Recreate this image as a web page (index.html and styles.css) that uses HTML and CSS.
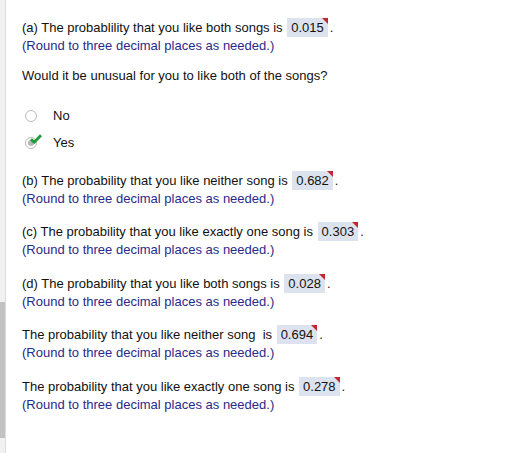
FILE: index.html
```html
<!DOCTYPE html>
<html>
<head>
<meta charset="utf-8">
<link rel="stylesheet" href="styles.css">
</head>
<body>
<div class="page">
  <div class="scroll"><div class="thumb"></div></div>
  <div class="divider"></div>
  <div class="content">
    <div class="block first">
      <div class="line">(a) The probablility that you like both songs is <span class="ans">0.015</span>.</div>
      <div class="line note">(Round to three decimal places as needed.)</div>
    </div>
    <div class="line question">Would it be unusual for you to like both of the songs?</div>
    <div class="options">
      <div class="opt"><span class="radio"></span><span class="lbl">No</span></div>
      <div class="opt"><span class="radio on"><svg class="check" viewBox="0 0 12 10" width="12" height="10"><path d="M1 5.2 L4.2 8.2 L11 1.2" fill="none" stroke="#1f9a3a" stroke-width="2.8"/></svg></span><span class="lbl">Yes</span></div>
    </div>
    <div class="block">
      <div class="line">(b) The probability that you like neither song is <span class="ans">0.682</span>.</div>
      <div class="line note">(Round to three decimal places as needed.)</div>
    </div>
    <div class="block">
      <div class="line">(c) The probability that you like exactly one song is <span class="ans">0.303</span>.</div>
      <div class="line note">(Round to three decimal places as needed.)</div>
    </div>
    <div class="block">
      <div class="line">(d) The probability that you like both songs is <span class="ans">0.028</span>.</div>
      <div class="line note">(Round to three decimal places as needed.)</div>
    </div>
    <div class="block">
      <div class="line">The probability that you like neither song&nbsp; is <span class="ans">0.694</span>.</div>
      <div class="line note">(Round to three decimal places as needed.)</div>
    </div>
    <div class="block">
      <div class="line">The probability that you like exactly one song is <span class="ans">0.278</span>.</div>
      <div class="line note">(Round to three decimal places as needed.)</div>
    </div>
  </div>
</div>
</body>
</html>
```
FILE: styles.css
```css
html, body {
  margin: 0;
  padding: 0;
  background: #ffffff;
}
.page {
  display: flex;
  width: 508px;
  height: 453px;
  overflow: hidden;
  font-family: "Liberation Sans", Arial, sans-serif;
  font-size: 13px;
  color: #111111;
}
.scroll {
  width: 5px;
  background: #f1f1f1;
  position: relative;
  flex: none;
}
.thumb {
  position: absolute;
  left: 0;
  top: 302px;
  width: 5px;
  height: 136px;
  background: #c2c2c2;
}
.divider {
  width: 1px;
  background: #dcdcdc;
  flex: none;
}
.content {
  padding: 18px 0 0 16px;
}
.line {
  line-height: 18px;
  white-space: nowrap;
}
.note {
  color: #2a2a8a;
}
.block {
  margin-top: 14.5px;
}
.block.first {
  margin-top: 0;
}
.question {
  margin-top: 12px;
}
.ans {
  position: relative;
  display: inline-block;
  background: #dde3ee;
  padding: 0 4px;
  line-height: 19px;
  margin: 0 2px 0 1px;
}
.ans::after {
  content: "";
  position: absolute;
  top: 0;
  right: 0;
  width: 0;
  height: 0;
  border-top: 6px solid #c0282d;
  border-left: 6px solid transparent;
}
.options {
  margin-top: 17px;
  margin-bottom: 14.5px;
}
.opt {
  display: flex;
  align-items: center;
  height: 27px;
}
.radio {
  position: relative;
  width: 12px;
  height: 12px;
  border: 1px solid #b9b9b9;
  border-radius: 50%;
  margin-left: 3px;
  box-sizing: border-box;
  background: #fff;
  flex: none;
}
.radio.on::before {
  content: "";
  position: absolute;
  left: 2px;
  top: 2px;
  width: 6px;
  height: 6px;
  border-radius: 50%;
  background: #b5b5b5;
}
.check {
  position: absolute;
  left: 4px;
  top: -4px;
}
.lbl {
  margin-left: 16px;
}
```
